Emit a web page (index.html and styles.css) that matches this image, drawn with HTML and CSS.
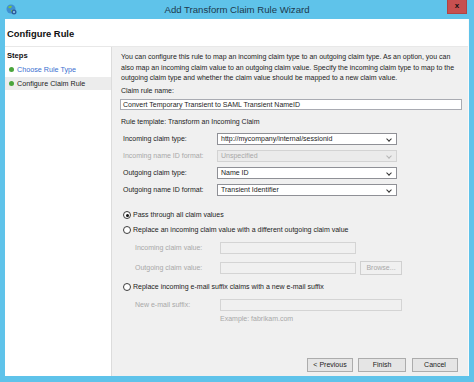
FILE: index.html
```html
<!DOCTYPE html>
<html lang="en">
  <head>
    <meta charset="UTF-8" />
    <title>Add Transform Claim Rule Wizard</title>
    <link rel="stylesheet" href="styles.css">
  </head>

  <body>
    <div class="window">
      <div class="titlebar">
        <svg class="appicon" width="11" height="11" viewBox="0 0 11 11">
          <circle cx="5" cy="5" r="4.5" fill="#3f8fd2" />
          <path d="M2 3 Q4 1 6 2 L5 4 Q3 5 2 3 Z M5 6 Q7 5 8 7 L6 9 Q5 8 5 6 Z" fill="#7cc04a" />
          <circle cx="8" cy="8" r="2.5" fill="#2d5f9e" />
          <circle cx="8" cy="8" r="1" fill="#9cd3f5" />
        </svg>
        <span class="title">Add Transform Claim Rule Wizard</span>
        <span class="close">x</span>
      </div>

      <div class="client">
        <div class="header">Configure Rule</div>

        <div class="body">
          <!-- steps pane -->
          <div class="steps">
            <div class="steps-title">Steps</div>
            <div class="step done"><i></i>Choose Rule Type</div>
            <div class="step current"><i></i>Configure Claim Rule</div>
          </div>

          <!-- rule form -->
          <div class="main">
            <p class="desc">You can configure this rule to map an incoming claim type to an outgoing claim type. As an option, you can also map an incoming claim value to an outgoing claim value. Specify the incoming claim type to map to the outgoing claim type and whether the claim value should be mapped to a new claim value.</p>

            <div class="label name-label">Claim rule name:</div>
            <div class="textbox name-box">Convert Temporary Transient to SAML Transient NameID</div>

            <div class="label template">Rule template: Transform an Incoming Claim</div>

            <div class="grid">
              <div class="label">Incoming claim type:</div>
              <div class="select">http://mycompany/internal/sessionid<span class="chev"></span></div>
              <div class="label off">Incoming name ID format:</div>
              <div class="select disabled">Unspecified<span class="chev"></span></div>
              <div class="label">Outgoing claim type:</div>
              <div class="select">Name ID<span class="chev"></span></div>
              <div class="label">Outgoing name ID format:</div>
              <div class="select">Transient Identifier<span class="chev"></span></div>
            </div>

            <div class="radio first checked"><i></i>Pass through all claim values</div>
            <div class="radio"><i></i>Replace an incoming claim value with a different outgoing claim value</div>

            <div class="sub sub-1">
              <span class="label off">Incoming claim value:</span>
              <span class="textbox disabled short"></span>
            </div>
            <div class="sub sub-2">
              <span class="label off">Outgoing claim value:</span>
              <span class="textbox disabled short"></span>
              <span class="button disabled">Browse...</span>
            </div>

            <div class="radio third"><i></i>Replace incoming e-mail suffix claims with a new e-mail suffix</div>

            <div class="sub sub-3">
              <span class="label off">New e-mail suffix:</span>
              <span class="textbox disabled long"></span>
            </div>
            <div class="example">Example: fabrikam.com</div>

            <div class="footer">
              <span class="button">&lt; Previous</span>
              <span class="button finish">Finish</span>
              <span class="button">Cancel</span>
            </div>
          </div>
        </div>
      </div>
    </div>
  </body>
</html>
```

FILE: styles.css
```css
* {
  margin: 0;
  padding: 0;
  box-sizing: border-box;
}

body {
  background: #5fc3ea;
  font-family: "Liberation Sans", Arial, sans-serif;
  font-size: 7px;
  color: #1c1c1c;
}

.window {
  width: 474px;
  height: 382px;
  background: #5fc3ea;
  display: flex;
  flex-direction: column;
}

.titlebar {
  height: 19px;
  position: relative;
  display: flex;
  align-items: center;
  justify-content: center;
}

.appicon {
  position: absolute;
  left: 6px;
  top: 4px;
}

.title {
  font-size: 9.6px;
  color: #1d3a4e;
  margin-top: -1px;
}

.close {
  position: absolute;
  right: 7px;
  top: 0;
  width: 20px;
  height: 14px;
  background: #c75050;
  border: 1px solid #b04444;
  border-top: 0;
  color: #111;
  font-weight: bold;
  font-size: 8px;
  line-height: 12px;
  text-align: center;
}

.client {
  margin: 0 5px 0 5px;
  height: 357px;
  background: #fff;
  display: flex;
  flex-direction: column;
  border-right: 1px solid #fafafa;
}

.header {
  height: 28px;
  padding: 9px 0 0 2px;
  font-size: 9.4px;
  font-weight: bold;
  color: #111;
  border-bottom: 1px solid #e8e8e8;
}

.body {
  flex: 1;
  display: flex;
}

.steps {
  width: 107px;
  background: #fff;
  border-right: 1px solid #dcdcdc;
  padding-top: 3px;
}

.steps-title {
  font-weight: bold;
  font-size: 7.6px;
  padding-left: 2px;
  height: 11px;
  line-height: 11px;
  color: #111;
}

.step {
  height: 13px;
  line-height: 13px;
  padding-left: 12px;
  position: relative;
  font-size: 7.2px;
}

.step i {
  position: absolute;
  left: 4px;
  top: 4px;
  width: 5px;
  height: 5px;
  border-radius: 50%;
  background: #4aa53c;
}

.step.done {
  color: #3b6fd0;
  margin: 2px 0 1px;
}

.step.current {
  background: #ececec;
}

.main {
  flex: 1;
  background: #f0f0f0;
  padding: 5px 6px 4px 9px;
  display: flex;
  flex-direction: column;
}

.desc {
  line-height: 10.5px;
  padding-right: 4px;
}

.label {
  line-height: 10px;
  white-space: nowrap;
}

.label.off {
  color: #a8a8a8;
}

.name-label {
  margin-top: 2px;
}

.textbox {
  display: block;
  height: 11px;
  background: #fff;
  border: 1px solid #a9abb2;
  line-height: 9px;
  padding-left: 2px;
}

.name-box {
  margin: 3px 0 0 -1px;
  width: 342px;
}

.template {
  margin-top: 7px;
}

.grid {
  margin-top: 6px;
  display: grid;
  grid-template-columns: 96px 180px;
  grid-auto-rows: 12px;
  row-gap: 5.3px;
  align-items: center;
}

.grid .label {
  padding-left: 2px;
}

.select {
  height: 12px;
  line-height: 10px;
  background: #fff;
  border: 1px solid #8f9096;
  padding-left: 3px;
  position: relative;
}

.select.disabled {
  background: #ebebeb;
  border-color: #d3d3d3;
  color: #a8a8a8;
}

.chev {
  position: absolute;
  right: 5px;
  top: 3px;
  width: 4px;
  height: 4px;
  border-right: 1px solid #333;
  border-bottom: 1px solid #333;
  transform: rotate(45deg);
}

.select.disabled .chev {
  border-color: #b5b5b5;
}

.radio {
  height: 10px;
  line-height: 10px;
  margin: 5px 0 0 2px;
  padding-left: 10px;
  position: relative;
}

.radio.first {
  margin-top: 14px;
}

.radio.third {
  margin-top: 7px;
}

.radio i {
  position: absolute;
  left: 0;
  top: 1px;
  width: 8px;
  height: 8px;
  border: 1px solid #3c3c3c;
  border-radius: 50%;
  background: #fff;
}

.radio.checked i::after {
  content: "";
  position: absolute;
  left: 1.5px;
  top: 1.5px;
  width: 3px;
  height: 3px;
  border-radius: 50%;
  background: #111;
}

.sub {
  display: flex;
  align-items: center;
  height: 14px;
  padding-left: 14px;
}

.sub .label {
  width: 85px;
}

.sub .textbox {
  height: 12px;
  border-color: #d4d4d4;
  background: #f0f0f0;
}

.sub .short {
  width: 136px;
}

.sub .long {
  width: 182px;
}

.sub-1 {
  margin-top: 6px;
}

.sub-2 {
  margin-top: 6px;
}

.sub-3 {
  margin-top: 6px;
}

.example {
  color: #a8a8a8;
  line-height: 10px;
  margin: 2px 0 0 99px;
}

.button {
  display: inline-block;
  height: 14px;
  line-height: 12px;
  border: 1px solid #acacac;
  background: #e5e5e5;
  text-align: center;
}

.button.disabled {
  width: 42px;
  margin-left: 4px;
  color: #a8a8a8;
  border-color: #d0d0d0;
  background: #f0f0f0;
}

.footer {
  margin-top: auto;
  display: flex;
  justify-content: flex-end;
  gap: 5px;
  padding-right: 4px;
}

.footer .button {
  width: 46px;
}

.footer .finish {
  width: 48px;
  margin-right: 1px;
}
```
